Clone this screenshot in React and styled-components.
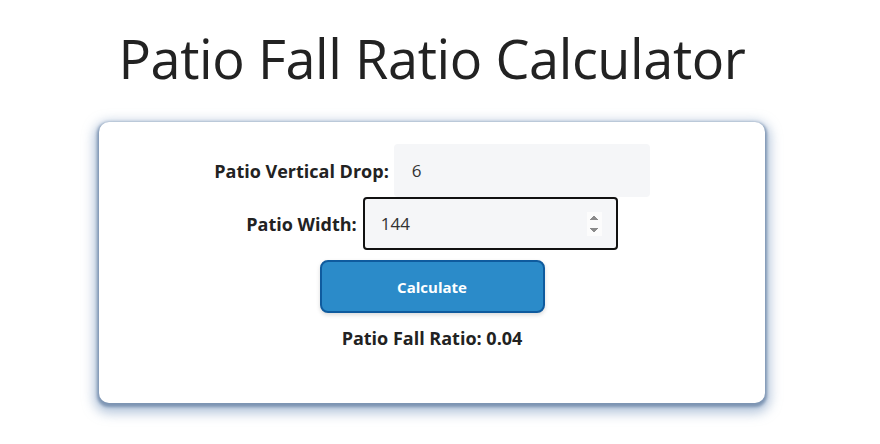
import React, { useState } from 'react'
import styled, { createGlobalStyle } from 'styled-components'

const Global = createGlobalStyle`
  body {
    margin: 0;
    background: #fff;
    font-family: "Open Sans", "Noto Sans", sans-serif;
    color: #222;
  }
`

const Page = styled.div`
  width: 864px;
  min-height: 444px;
  display: flex;
  flex-direction: column;
  align-items: center;
`

const Title = styled.h1`
  margin: 22px 0 0;
  font-size: 54px;
  font-weight: 400;
  letter-spacing: -0.4px;
  line-height: 72px;
  color: #222;
`

const Card = styled.div`
  margin-top: 28px;
  width: 666px;
  height: 281px;
  box-sizing: border-box;
  background: #fff;
  border-radius: 10px;
  box-shadow: 0 2px 3px 2px rgba(115, 140, 172, 0.85), 0 5px 12px 5px rgba(130, 158, 195, 0.6);
  padding-top: 22px;
  display: flex;
  flex-direction: column;
  align-items: center;
`

const Row = styled.div`
  display: flex;
  align-items: center;
  justify-content: center;
  gap: ${({ $gap }) => $gap}px;
`

const Label = styled.label`
  font-size: 18px;
  font-weight: 700;
  color: #222;
`

const Input = styled.input`
  box-sizing: border-box;
  width: ${({ $w }) => $w}px;
  height: 53px;
  padding: 0 14px 0 16px;
  font-family: inherit;
  font-size: 17px;
  color: #333;
  background: #f5f6f8;
  border: ${({ $focus }) => ($focus ? '2px solid #111' : '2px solid transparent')};
  border-radius: 4px;
  outline: none;
  caret-color: #111;
  &::-webkit-inner-spin-button {
    opacity: 1;
    height: 24px;
  }
`

const Button = styled.button`
  margin-top: 10px;
  width: 225px;
  height: 53px;
  background: #2b8bc9;
  color: #fff;
  border: 2px solid #0f5b9e;
  border-radius: 8px;
  font-family: inherit;
  font-size: 15px;
  font-weight: 700;
  box-shadow: 0 2px 4px rgba(0, 0, 0, 0.15);
  cursor: pointer;
`

const Result = styled.div`
  margin-top: 13px;
  font-size: 18px;
  font-weight: 700;
  color: #222;
`

export default function App() {
  const [drop, setDrop] = useState('6')
  const [width, setWidth] = useState('144')
  const ratio = Number(width) ? (Number(drop) / Number(width)).toFixed(2) : '0.00'
  return (
    <>
      <Global />
      <Page>
        <Title>Patio Fall Ratio Calculator</Title>
        <Card>
          <Row $gap={5}>
            <Label>Patio Vertical Drop:</Label>
            <Input $w={256} value={drop} onChange={e => setDrop(e.target.value)} />
          </Row>
          <Row $gap={6}>
            <Label>Patio Width:</Label>
            <Input $w={255} $focus autoFocus type='number' value={width} onChange={e => setWidth(e.target.value)} />
          </Row>
          <Button>Calculate</Button>
          <Result>Patio Fall Ratio: {ratio}</Result>
        </Card>
      </Page>
    </>
  )
}
